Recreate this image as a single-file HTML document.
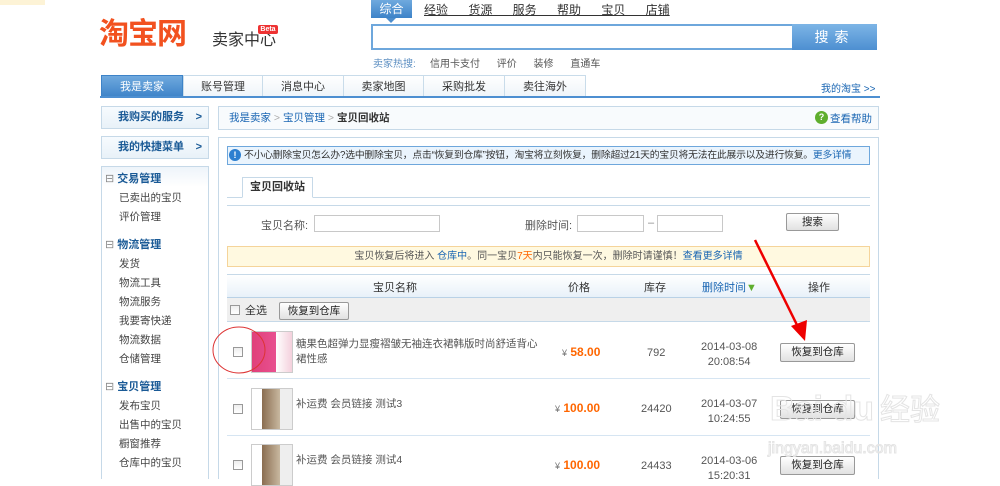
<!DOCTYPE html>
<html><head><meta charset="utf-8"><style>
*{margin:0;padding:0;box-sizing:border-box}
body{width:1000px;height:479px;overflow:hidden;background:#fff;font-family:"Liberation Sans","Noto Sans CJK SC",sans-serif;font-size:11px;color:#333;position:relative}
.a{position:absolute;white-space:nowrap}
a{color:#1a66b3;text-decoration:none}
.nav div{position:absolute;top:75px;height:22px;line-height:22px;text-align:center;border:1px solid #c9dcea;border-bottom:none;background:linear-gradient(#fff,#eef4f9);font-size:11px;color:#333}
.side{border:1px solid #c6d9e8;background:linear-gradient(#f7fbfe,#e8f1f8)}
.sec{color:#1a5a96;font-weight:bold;font-size:11px}
.it{color:#444;font-size:10.5px}
.btn{border:1px solid #999;border-radius:2px;background:linear-gradient(#fff,#e1e1e1);text-align:center;font-size:10.5px;color:#222}
.cb{width:10px;height:10px;border:1px solid #999;background:linear-gradient(#eee,#fff)}
.inp{border:1px solid #c8c8c8;height:17px}
.price{color:#f60;font-weight:bold;font-size:12px}
.price small{color:#777;font-weight:normal;font-size:9px}
.g{color:#555}
</style></head><body>
<div class="a" style="left:0;top:0;width:45px;height:5px;background:#fdf3d6"></div>
<div class="a" style="left:99px;top:18px;font-size:30px;line-height:34px;font-weight:bold;color:#f2511f;letter-spacing:-1px">淘宝网</div>
<div class="a" style="left:212px;top:31px;font-size:16px;line-height:20px;color:#333">卖家中心</div>
<div class="a" style="left:258px;top:25px;width:20px;height:9px;background:#e33;border-radius:2px;color:#fff;font-size:7px;line-height:9px;text-align:center;font-weight:bold">Beta</div>
<div class="a" style="left:371px;top:0;width:41px;height:18px;background:linear-gradient(#6fa9de,#3d83c8);color:#fff;font-size:12px;line-height:18px;text-align:center">综合</div>
<div class="a" style="left:386px;top:18px;width:0;height:0;border:5px solid transparent;border-top-color:#4c8dcd"></div>
<div class="a" style="left:424px;top:1px;font-size:12px;color:#333;word-spacing:17px;text-decoration:underline">经验 货源 服务 帮助 宝贝 店铺</div>
<div class="a" style="left:371px;top:24px;width:506px;height:26px;border:2px solid #6ea7dc;background:#fff"></div>
<div class="a" style="left:792px;top:24px;width:85px;height:26px;background:linear-gradient(#7db5e6,#4d8fd1);color:#fff;font-size:14px;text-align:center;line-height:26px;letter-spacing:6px">搜索</div>
<div class="a" style="left:373px;top:55px;font-size:10px;color:#5d8fc2">卖家热搜:</div>
<div class="a" style="left:430px;top:55px;font-size:10px;color:#555;word-spacing:14px">信用卡支付 评价 装修 直通车</div>
<div class="nav">
<div style="left:101px;width:82px;background:linear-gradient(#6fa9de,#3d83c8);color:#fff;border-color:#3d83c8">我是卖家</div>
<div style="left:183px;width:80px">账号管理</div>
<div style="left:262px;width:82px">消息中心</div>
<div style="left:343px;width:81px">卖家地图</div>
<div style="left:423px;width:82px">采购批发</div>
<div style="left:504px;width:82px">卖往海外</div>
</div>
<div class="a" style="left:100px;top:96px;width:780px;height:2px;background:#4d8fd1"></div>
<div class="a" style="left:821px;top:80px;color:#1a66b3;font-size:10px">我的淘宝 &gt;&gt;</div>
<div class="a side" style="left:101px;top:106px;width:108px;height:23px;line-height:21px;padding-left:16px;color:#1a5a96;font-weight:bold">我购买的服务<span style="position:absolute;right:6px">&gt;</span></div>
<div class="a side" style="left:101px;top:136px;width:108px;height:23px;line-height:21px;padding-left:16px;color:#1a5a96;font-weight:bold">我的快捷菜单<span style="position:absolute;right:6px">&gt;</span></div>
<div class="a" style="left:101px;top:166px;width:108px;height:313px;border:1px solid #c6d9e8;border-bottom:none;background:linear-gradient(#eef4fa,#fff 20px)"></div>
<div class="a" style="left:105px;top:170px;line-height:19px">
<div class="sec"><span style="color:#888;font-weight:normal">⊟</span> 交易管理</div>
<div class="it" style="padding-left:14px">已卖出的宝贝<br>评价管理</div>
<div class="sec" style="margin-top:9px"><span style="color:#888;font-weight:normal">⊟</span> 物流管理</div>
<div class="it" style="padding-left:14px">发货<br>物流工具<br>物流服务<br>我要寄快递<br>物流数据<br>仓储管理</div>
<div class="sec" style="margin-top:9px"><span style="color:#888;font-weight:normal">⊟</span> 宝贝管理</div>
<div class="it" style="padding-left:14px">发布宝贝<br>出售中的宝贝<br>橱窗推荐<br>仓库中的宝贝</div>
</div>
<div class="a" style="left:218px;top:106px;width:661px;height:24px;border:1px solid #c6d9e8;background:#f8fbfd;line-height:22px;padding-left:10px;font-size:10.5px"><a>我是卖家</a> <span style="color:#aaa">&gt;</span> <a>宝贝管理</a> <span style="color:#aaa">&gt;</span> <b>宝贝回收站</b></div>
<div class="a" style="left:815px;top:111px;width:13px;height:13px;border-radius:50%;background:#5fae2e;color:#fff;font-size:9px;text-align:center;line-height:13px;font-weight:bold">?</div>
<div class="a" style="left:830px;top:111px;color:#1a66b3;font-size:10.5px">查看帮助</div>
<div class="a" style="left:218px;top:137px;width:661px;height:342px;border:1px solid #c6d9e8;border-bottom:none"></div>
<div class="a" style="left:227px;top:146px;width:643px;height:19px;border:1px solid #6ea7dc;background:#eaf4fd;line-height:17px;padding-left:16px;font-size:9.8px;letter-spacing:-0.2px;overflow:hidden">不小心删除宝贝怎么办?选中删除宝贝，点击“恢复到仓库”按钮，淘宝将立刻恢复，删除超过21天的宝贝将无法在此展示以及进行恢复。<a>更多详情</a></div>
<div class="a" style="left:229px;top:149px;width:12px;height:12px;border-radius:50%;background:#2d7fd0;color:#fff;font-size:9px;text-align:center;line-height:12px;font-weight:bold">!</div>
<div class="a" style="left:227px;top:197px;width:643px;height:1px;background:#c6d9e8"></div>
<div class="a" style="left:227px;top:205px;width:643px;height:1px;background:#c6d9e8"></div>
<div class="a" style="left:242px;top:177px;width:71px;height:21px;border:1px solid #c6d9e8;border-bottom:1px solid #fff;background:#fff;text-align:center;line-height:19px;font-weight:bold">宝贝回收站</div>
<div class="a g" style="left:261px;top:217px">宝贝名称:</div>
<div class="a inp" style="left:314px;top:215px;width:126px"></div>
<div class="a g" style="left:525px;top:217px">删除时间:</div>
<div class="a inp" style="left:577px;top:215px;width:67px"></div>
<div class="a" style="left:648px;top:217px;color:#888">–</div>
<div class="a inp" style="left:657px;top:215px;width:66px"></div>
<div class="a btn" style="left:786px;top:213px;width:53px;height:18px;line-height:16px">搜索</div>
<div class="a" style="left:227px;top:246px;width:643px;height:21px;border:1px solid #f5d49a;background:#fff9e0;text-align:center;line-height:19px;font-size:10px"><span style="color:#555">宝贝恢复后将进入 <a>仓库中</a>。同一宝贝<span style="color:#f60">7天</span>内只能恢复一次，删除时请谨慎！<a>查看更多详情</a></span></div>
<div class="a" style="left:227px;top:274px;width:643px;height:24px;border-top:1px solid #c6d9e8;border-bottom:1px solid #b9d1e6;background:linear-gradient(#fff,#e8f1f9)"></div>
<div class="a" style="left:373px;top:279px">宝贝名称</div>
<div class="a" style="left:568px;top:279px">价格</div>
<div class="a" style="left:644px;top:279px">库存</div>
<div class="a" style="left:702px;top:279px;color:#1a66b3">删除时间<span style="color:#5fae2e">▼</span></div>
<div class="a" style="left:808px;top:279px">操作</div>
<div class="a" style="left:227px;top:298px;width:643px;height:24px;background:#efefef;border-bottom:1px solid #c6d9e8"></div>
<div class="a cb" style="left:230px;top:305px"></div>
<div class="a" style="left:245px;top:302px">全选</div>
<div class="a btn" style="left:279px;top:302px;width:70px;height:18px;line-height:16px">恢复到仓库</div>
<div class="a" style="left:227px;top:378px;width:643px;height:1px;background:#d6e5f2"></div>
<div class="a" style="left:227px;top:435px;width:643px;height:1px;background:#d6e5f2"></div>
<div class="a cb" style="left:233px;top:347px"></div>
<div class="a" style="left:251px;top:331px;width:42px;height:42px;border:1px solid #ccc;background:linear-gradient(90deg,#e0407a 0,#e85090 60%,#fff 60%,#f4d0dc)"></div>
<div class="a" style="left:296px;top:337px;width:250px;line-height:15px;color:#555;font-size:10.5px;white-space:normal">糖果色超弹力显瘦褶皱无袖连衣裙韩版时尚舒适背心裙性感</div>
<div class="a price" style="left:562px;top:345px"><small>¥</small> 58.00</div>
<div class="a g" style="left:647px;top:347px">792</div>
<div class="a g" style="left:701px;top:340px;text-align:center;line-height:15px">2014-03-08<br>20:08:54</div>
<div class="a btn" style="left:780px;top:343px;width:75px;height:19px;line-height:17px">恢复到仓库</div>
<div class="a cb" style="left:233px;top:404px"></div>
<div class="a" style="left:251px;top:388px;width:42px;height:42px;border:1px solid #ccc;background:linear-gradient(90deg,#fff 10px,#8a6d50 10px,#c8b8a0 28px,#eee 28px)"></div>
<div class="a" style="left:296px;top:396px;color:#555;font-size:10.5px">补运费 会员链接 测试3</div>
<div class="a price" style="left:555px;top:401px"><small>¥</small> 100.00</div>
<div class="a g" style="left:641px;top:403px">24420</div>
<div class="a g" style="left:701px;top:397px;text-align:center;line-height:15px">2014-03-07<br>10:24:55</div>
<div class="a btn" style="left:780px;top:400px;width:75px;height:19px;line-height:17px">恢复到仓库</div>
<div class="a cb" style="left:233px;top:460px"></div>
<div class="a" style="left:251px;top:444px;width:42px;height:42px;border:1px solid #ccc;background:linear-gradient(90deg,#fff 10px,#8a6d50 10px,#c8b8a0 28px,#eee 28px)"></div>
<div class="a" style="left:296px;top:452px;color:#555;font-size:10.5px">补运费 会员链接 测试4</div>
<div class="a price" style="left:555px;top:458px"><small>¥</small> 100.00</div>
<div class="a g" style="left:641px;top:460px">24433</div>
<div class="a g" style="left:701px;top:454px;text-align:center;line-height:15px">2014-03-06<br>15:20:31</div>
<div class="a btn" style="left:780px;top:456px;width:75px;height:19px;line-height:17px">恢复到仓库</div>
<svg class="a" style="left:0;top:0" width="1000" height="479">
<ellipse cx="239" cy="350" rx="26" ry="23" fill="none" stroke="#d33" stroke-width="1"/>
<line x1="755" y1="240" x2="798" y2="327" stroke="#e00" stroke-width="2.5"/>
<polygon points="791,326 807,320 805,341" fill="#e00"/>
<text x="770" y="420" font-family="Liberation Sans" font-size="34" font-weight="bold" fill="none" stroke="#e4e4e4">Bai du</text>
<text x="880" y="420" font-family="Noto Sans CJK SC" font-size="30" fill="none" stroke="#e4e4e4">经验</text>
<text x="768" y="453" font-family="Liberation Sans" font-size="16" fill="none" stroke="#e4e4e4">jingyan.baidu.com</text>
</svg>
</body></html>
